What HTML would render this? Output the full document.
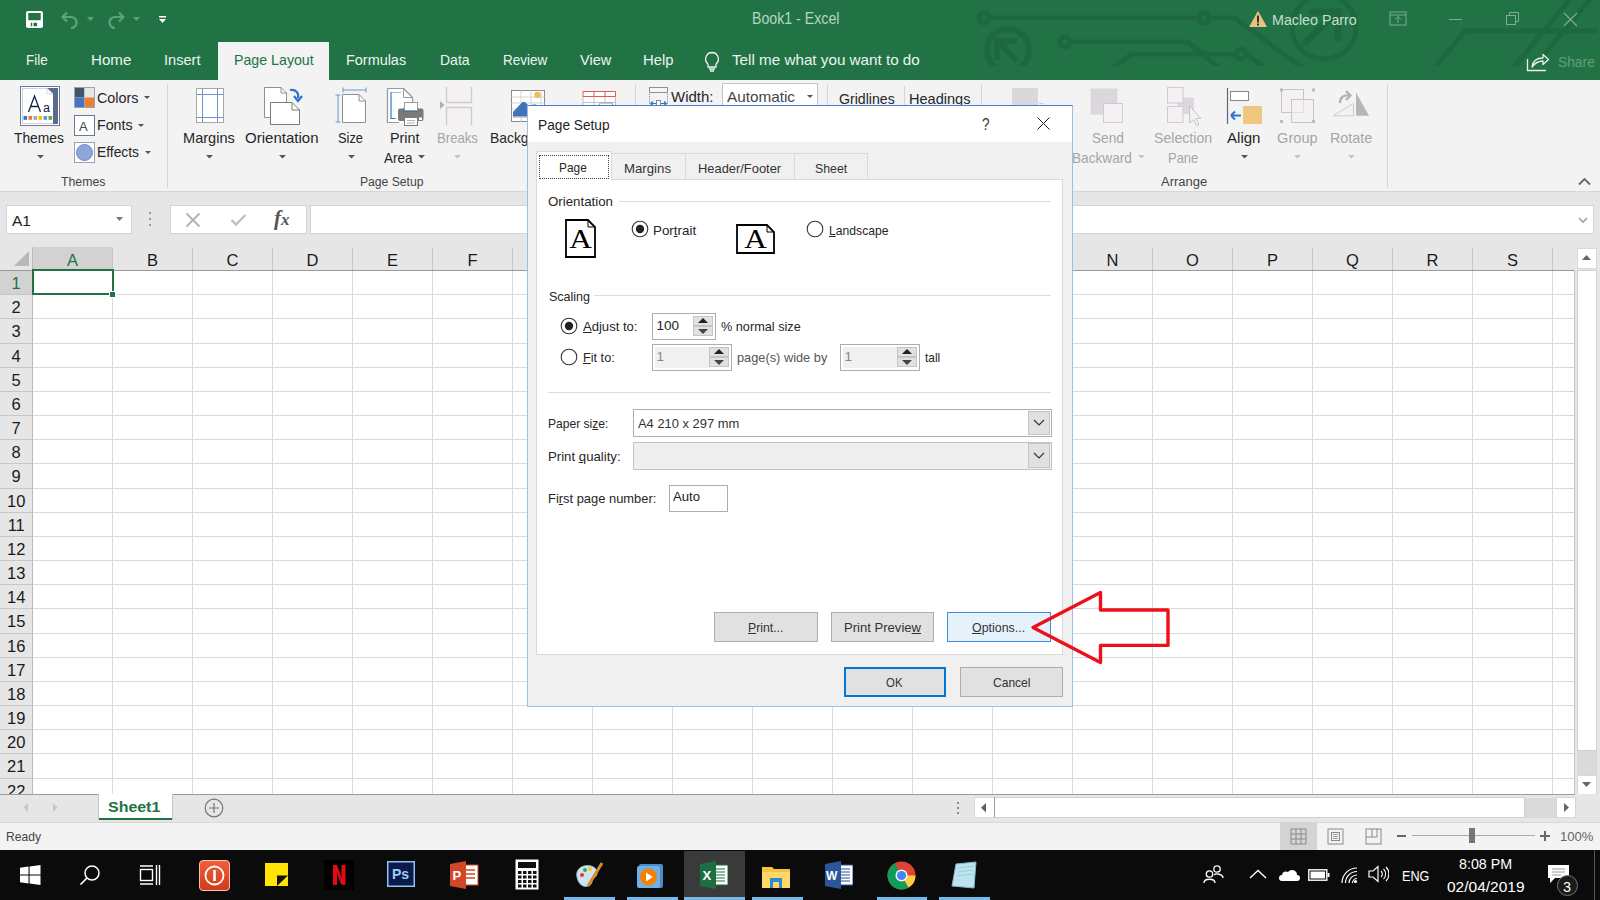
<!DOCTYPE html>
<html><head><meta charset="utf-8">
<style>
*{margin:0;padding:0;box-sizing:border-box}
html,body{width:1600px;height:900px;overflow:hidden;background:#fff;font-family:"Liberation Sans",sans-serif;}
.a{position:absolute}
.t{position:absolute;white-space:nowrap;transform-origin:0 0}
u{text-decoration:underline;text-underline-offset:1px}
</style></head><body>
<div class="a" style="left:0px;top:0px;width:1600px;height:80px;background:#217346"></div>
<svg class="a" style="left:960px;top:0px;" width="640" height="66" viewBox="0 0 640 66"><g stroke="#1e683f" stroke-width="5" fill="none" stroke-linecap="round">
<circle cx="24" cy="18" r="5"/><path d="M29 18H239"/><circle cx="244" cy="18" r="5"/><path d="M249 18H275L345 70"/>
<circle cx="48" cy="50" r="21" stroke-width="6"/><path d="M37 60V41H57M40 44L57 61" stroke-width="6" stroke-linecap="butt"/>
<circle cx="105" cy="42" r="5"/><path d="M110 42H228L262 70"/>
<path d="M150 70L172 54H276"/><circle cx="281" cy="54" r="5"/><path d="M286 54L308 70"/>
<circle cx="364" cy="27" r="32"/><path d="M346 42L374 14" stroke-width="7"/><path d="M352 12H378V38" stroke-width="7"/>
<path d="M473 70L505 31H635"/><path d="M554 67L611 -2"/><path d="M583 56L631 -2"/>
</g></svg>
<div class="t" style="left:751.60px;top:11.37px;font-size:16px;line-height:16px;color:#b7d6c2;transform:scaleX(0.8857);">Book1  -  Excel</div>
<svg class="a" style="left:26px;top:11px;" width="17" height="17" viewBox="0 0 17 17"><rect x="0" y="0" width="17" height="17" rx="2" fill="#fff"/><rect x="2.3" y="2" width="12.4" height="7.2" fill="#217346"/><rect x="4.8" y="11.8" width="1.4" height="3.4" fill="#217346"/><rect x="7.5" y="11.8" width="3.6" height="3.4" fill="#217346"/></svg>
<svg class="a" style="left:61px;top:11px;" width="19" height="18" viewBox="0 0 19 18"><path d="M2 6H10A5.5 5.5 0 0 1 10 17" fill="none" stroke="#5fa27a" stroke-width="2.2"/><path d="M6 1.5L1.5 6L6 10.5" stroke="#5fa27a" stroke-width="2.2" fill="none"/></svg>
<svg class="a" style="left:87px;top:17px;" width="8" height="5" viewBox="0 0 8 5"><path d="M0 0H7L3.5 4Z" fill="#5fa27a"/></svg>
<svg class="a" style="left:106px;top:11px;" width="19" height="18" viewBox="0 0 19 18"><path d="M17 6H9A5.5 5.5 0 0 0 9 17" fill="none" stroke="#5fa27a" stroke-width="2.2"/><path d="M13 1.5L17.5 6L13 10.5" stroke="#5fa27a" stroke-width="2.2" fill="none"/></svg>
<svg class="a" style="left:133px;top:17px;" width="8" height="5" viewBox="0 0 8 5"><path d="M0 0H7L3.5 4Z" fill="#5fa27a"/></svg>
<svg class="a" style="left:158px;top:15px;" width="10" height="10" viewBox="0 0 10 10"><rect x="1" y="1" width="7" height="1.5" fill="#fff"/><path d="M1 4H8L4.5 8Z" fill="#fff"/></svg>
<svg class="a" style="left:1248px;top:10px;" width="20" height="18" viewBox="0 0 20 18"><path d="M10 1L19 17H1Z" fill="#ebc381"/><rect x="9" y="5.5" width="2" height="7" fill="#333"/><rect x="9" y="13.5" width="2" height="2" fill="#333"/></svg>
<div class="t" style="left:1272.00px;top:11.89px;font-size:15.5px;line-height:15.5px;color:#c4dfce;transform:scaleX(0.9199);">Macleo Parro</div>
<svg class="a" style="left:1389px;top:11px;" width="18" height="15" viewBox="0 0 18 15"><rect x="1" y="1" width="16" height="13" fill="none" stroke="#7fae91" stroke-width="1"/><path d="M1 4H17M9 12V6M6 8.5L9 5.5L12 8.5" stroke="#7fae91" fill="none"/></svg>
<div class="a" style="left:1449px;top:19px;width:13px;height:1px;background:#7fae91"></div>
<svg class="a" style="left:1505px;top:11px;" width="15" height="15" viewBox="0 0 15 15"><rect x="1.5" y="4.5" width="9" height="9" fill="none" stroke="#7fae91"/><path d="M4.5 4.5V1.5H13.5V10.5H10.5" fill="none" stroke="#7fae91"/></svg>
<svg class="a" style="left:1563px;top:12px;" width="15" height="15" viewBox="0 0 15 15"><path d="M1 1L14 14M14 1L1 14" stroke="#7fae91" stroke-width="1.1"/></svg>
<div class="a" style="left:218px;top:42px;width:111px;height:38px;background:#f3f3f3"></div>
<div class="t" style="left:26.10px;top:53.34px;font-size:14.5px;line-height:14.5px;color:#eef3ef;transform:scaleX(0.9287);">File</div>
<div class="t" style="left:91.40px;top:53.34px;font-size:14.5px;line-height:14.5px;color:#eef3ef;transform:scaleX(1.0419);">Home</div>
<div class="t" style="left:164.30px;top:53.34px;font-size:14.5px;line-height:14.5px;color:#eef3ef;transform:scaleX(1.0065);">Insert</div>
<div class="t" style="left:346.20px;top:53.34px;font-size:14.5px;line-height:14.5px;color:#eef3ef;transform:scaleX(0.9945);">Formulas</div>
<div class="t" style="left:439.90px;top:53.34px;font-size:14.5px;line-height:14.5px;color:#eef3ef;transform:scaleX(0.9664);">Data</div>
<div class="t" style="left:503.00px;top:53.34px;font-size:14.5px;line-height:14.5px;color:#eef3ef;transform:scaleX(0.9339);">Review</div>
<div class="t" style="left:579.80px;top:53.34px;font-size:14.5px;line-height:14.5px;color:#eef3ef;transform:scaleX(1.0010);">View</div>
<div class="t" style="left:643.40px;top:53.34px;font-size:14.5px;line-height:14.5px;color:#eef3ef;transform:scaleX(1.0227);">Help</div>
<div class="t" style="left:233.70px;top:53.34px;font-size:14.5px;line-height:14.5px;color:#217346;transform:scaleX(0.9788);">Page Layout</div>
<svg class="a" style="left:703px;top:51px;" width="18" height="21" viewBox="0 0 18 21"><path d="M9 1.5A6.5 6.5 0 0 0 5 13V16H13V13A6.5 6.5 0 0 0 9 1.5Z" fill="none" stroke="#f2f2f2" stroke-width="1.3"/><path d="M6 18H12M7 20H11" stroke="#f2f2f2" stroke-width="1.3"/></svg>
<div class="t" style="left:731.70px;top:53.34px;font-size:14.5px;line-height:14.5px;color:#eef3ef;transform:scaleX(1.0496);">Tell me what you want to do</div>
<svg class="a" style="left:1526px;top:50px;" width="24" height="22" viewBox="0 0 24 22"><path d="M1.5 9V20.5H20" fill="none" stroke="#f0f0f0" stroke-width="1.3"/><path d="M6 17C7 10 12 8 17 8V4.5L22.5 9.5L17 14.5V11C12 11 9 13 6 17Z" fill="none" stroke="#f0f0f0" stroke-width="1.3" stroke-linejoin="round"/></svg>
<div class="t" style="left:1557.50px;top:54.39px;font-size:15.5px;line-height:15.5px;color:#629f7c;transform:scaleX(0.8897);">Share</div>
<div class="a" style="left:0px;top:80px;width:1600px;height:112px;background:#f3f3f3"></div>
<div class="a" style="left:0px;top:191px;width:1600px;height:1px;background:#d6d6d6"></div>
<div class="a" style="left:167px;top:84px;width:1px;height:104px;background:#d5d5d5"></div>
<div class="a" style="left:635px;top:84px;width:1px;height:104px;background:#d5d5d5"></div>
<div class="a" style="left:827px;top:84px;width:1px;height:104px;background:#d5d5d5"></div>
<div class="a" style="left:981px;top:84px;width:1px;height:104px;background:#d5d5d5"></div>
<div class="a" style="left:1387px;top:84px;width:1px;height:104px;background:#d5d5d5"></div>
<div class="a" style="left:904px;top:86px;width:1px;height:22px;background:#d5d5d5"></div>
<svg class="a" style="left:20px;top:86px;" width="40" height="40" viewBox="0 0 40 40"><rect x="0.5" y="0.5" width="39" height="39" fill="#fff" stroke="#6b7896"/>
<rect x="2.5" y="2.5" width="35" height="35" fill="#fff" stroke="#cdd4e2"/>
<path d="M27 2H38V38H33V7.5Z" fill="#5b6b88"/><path d="M27 2.5L32.5 8H27Z" fill="#fff" stroke="#b9c2d2" stroke-width="0.6"/>
<path d="M8.5 26L14.5 10L20.5 26M10.7 20.5H18.3" fill="none" stroke="#14204a" stroke-width="1.3"/>
<text x="23" y="26" font-family="Liberation Sans" font-size="12.5" fill="#14204a">a</text>
<rect x="3.5" y="30" width="3.6" height="3.8" fill="#2f74cf"/><rect x="8.5" y="30" width="3.6" height="3.8" fill="#e8782a"/><rect x="13.5" y="30" width="3.6" height="3.8" fill="#a5a5a5"/><rect x="18.5" y="30" width="3.6" height="3.8" fill="#fcb900"/><rect x="23.5" y="30" width="3.6" height="3.8" fill="#4aa3df"/><rect x="28.5" y="30" width="3.6" height="3.8" fill="#66a83c"/></svg>
<div class="t" style="left:14.30px;top:130.64px;font-size:14.5px;line-height:14.5px;color:#262626;transform:scaleX(0.9527);">Themes</div>
<svg class="a" style="left:36.5px;top:155px;" width="7.0" height="4.5" viewBox="0 0 7.0 4.5"><path d="M0 0H7.0L3.5 3.5Z" fill="#555"/></svg>
<svg class="a" style="left:74px;top:87px;" width="21" height="21" viewBox="0 0 21 21"><rect x="0.5" y="0.5" width="20" height="20" fill="#fff" stroke="#9aa2ae"/><rect x="1" y="1" width="9.5" height="9.5" fill="#44546a"/><rect x="10.5" y="1" width="9.5" height="9.5" fill="#e7e6e6"/><rect x="1" y="10.5" width="9.5" height="9.5" fill="#4472c4"/><rect x="10.5" y="10.5" width="9.5" height="9.5" fill="#ed7d31"/></svg>
<div class="t" style="left:97.20px;top:90.94px;font-size:14.5px;line-height:14.5px;color:#262626;transform:scaleX(0.9904);">Colors</div>
<svg class="a" style="left:144px;top:96px;" width="6" height="4" viewBox="0 0 6 4"><path d="M0 0H6L3 3Z" fill="#555"/></svg>
<svg class="a" style="left:74px;top:115px;" width="21" height="21" viewBox="0 0 21 21"><rect x="0.5" y="0.5" width="20" height="20" fill="#fff" stroke="#6a7a96"/><text x="5" y="16" font-family="Liberation Sans" font-size="13" fill="#444">A</text></svg>
<div class="t" style="left:97.40px;top:118.24px;font-size:14.5px;line-height:14.5px;color:#262626;transform:scaleX(0.9817);">Fonts</div>
<svg class="a" style="left:138px;top:124px;" width="6" height="4" viewBox="0 0 6 4"><path d="M0 0H6L3 3Z" fill="#555"/></svg>
<svg class="a" style="left:74px;top:142px;" width="21" height="21" viewBox="0 0 21 21"><rect x="0.5" y="0.5" width="20" height="20" fill="#fff" stroke="#9aa2ae"/><circle cx="10.5" cy="10.5" r="8" fill="#8fa6dc" stroke="#6c8ad0"/></svg>
<div class="t" style="left:97.40px;top:145.14px;font-size:14.5px;line-height:14.5px;color:#262626;transform:scaleX(0.9533);">Effects</div>
<svg class="a" style="left:145px;top:151px;" width="6" height="4" viewBox="0 0 6 4"><path d="M0 0H6L3 3Z" fill="#555"/></svg>
<div class="t" style="left:61.00px;top:176.10px;font-size:12.3px;line-height:12.3px;color:#444;transform:scaleX(1.0015);">Themes</div>
<svg class="a" style="left:195px;top:87px;" width="30" height="37" viewBox="0 0 30 37"><rect x="1.5" y="1.5" width="27" height="34" fill="#fff" stroke="#a8a8a8"/><path d="M1.5 7.5H28.5M1.5 30.5H28.5M7.5 1.5V35.5M22.5 1.5V35.5" stroke="#6e94cf" stroke-width="1"/></svg>
<div class="t" style="left:183.40px;top:130.64px;font-size:14.5px;line-height:14.5px;color:#262626;transform:scaleX(1.0044);">Margins</div>
<svg class="a" style="left:205.5px;top:155px;" width="7.0" height="4.5" viewBox="0 0 7.0 4.5"><path d="M0 0H7.0L3.5 3.5Z" fill="#555"/></svg>
<svg class="a" style="left:263px;top:86px;" width="40" height="40" viewBox="0 0 40 40"><path d="M1.5 1.5H18L23.5 7V31.5H1.5Z" fill="#fff" stroke="#909090"/><path d="M18 1.5V7H23.5" fill="none" stroke="#909090"/>
<path d="M7.5 16.5H29L36.5 24V38.5H7.5Z" fill="#fff" stroke="#7a7a7a"/><path d="M29 16.5V24H36.5" fill="none" stroke="#7a7a7a"/>
<path d="M27 4C33 3 36 7 35 12" fill="none" stroke="#2e75c8" stroke-width="2.2"/><path d="M31 10L35 15L39 10" fill="none" stroke="#2e75c8" stroke-width="2.2"/></svg>
<div class="t" style="left:245.40px;top:130.64px;font-size:14.5px;line-height:14.5px;color:#262626;transform:scaleX(1.0362);">Orientation</div>
<svg class="a" style="left:278.5px;top:155px;" width="7.0" height="4.5" viewBox="0 0 7.0 4.5"><path d="M0 0H7.0L3.5 3.5Z" fill="#555"/></svg>
<svg class="a" style="left:335px;top:87px;" width="34" height="38" viewBox="0 0 34 38"><path d="M7.5 7.5H24L30.5 14V35.5H7.5Z" fill="#fff" stroke="#909090"/><path d="M24 7.5V14H30.5" fill="none" stroke="#909090"/>
<path d="M8 3H31M8 0.5V5.5M31 0.5V5.5" stroke="#6e94cf" stroke-width="1"/><path d="M3 8V35M0.5 8H5.5M0.5 35H5.5" stroke="#6e94cf" stroke-width="1"/></svg>
<div class="t" style="left:338.00px;top:130.64px;font-size:14.5px;line-height:14.5px;color:#262626;transform:scaleX(0.8863);">Size</div>
<svg class="a" style="left:347.5px;top:155px;" width="7.0" height="4.5" viewBox="0 0 7.0 4.5"><path d="M0 0H7.0L3.5 3.5Z" fill="#555"/></svg>
<svg class="a" style="left:385px;top:86px;" width="40" height="41" viewBox="0 0 40 41"><path d="M2.5 2.5H18.5L27.5 11.5V16M2.5 2.5V36.5H14" fill="#fff" stroke="#9a9a9a" stroke-width="1.2"/><path d="M2.5 2.5H18.5L27.5 11.5V36.5H2.5Z" fill="#fff"/><path d="M2.5 2.5H18.5L27.5 11.5V16M2.5 2.5V36.5H14" fill="none" stroke="#9a9a9a" stroke-width="1.2"/><path d="M18.5 2.5V11.5H27.5" fill="none" stroke="#9a9a9a" stroke-width="1"/>
<path d="M16 6.5H6V32.5H10.5" fill="none" stroke="#1f6fc5" stroke-width="1.1"/><path d="M6.5 6.5H16" stroke="#a9c2e0" stroke-width="1.1"/>
<rect x="13" y="22.5" width="25.5" height="12.5" rx="2" fill="#7a7a7a"/><rect x="18" y="22.5" width="15.5" height="3" fill="#1f6fc5"/><rect x="34" y="31.5" width="3" height="2.5" fill="#fff"/>
<rect x="19.5" y="16.5" width="13" height="8" fill="#fff" stroke="#9a9a9a"/>
<rect x="19.5" y="31.5" width="13" height="8" fill="#fff" stroke="#7a7a7a"/><path d="M22 34.5H30M22 37H30" stroke="#aaa" stroke-width="0.9"/></svg>
<div class="t" style="left:389.80px;top:130.64px;font-size:14.5px;line-height:14.5px;color:#262626;transform:scaleX(0.9861);">Print</div>
<div class="t" style="left:383.80px;top:150.64px;font-size:14.5px;line-height:14.5px;color:#262626;transform:scaleX(0.9272);">Area</div>
<svg class="a" style="left:417.5px;top:155px;" width="7.0" height="4.5" viewBox="0 0 7.0 4.5"><path d="M0 0H7.0L3.5 3.5Z" fill="#555"/></svg>
<svg class="a" style="left:438px;top:86px;" width="36" height="40" viewBox="0 0 36 40"><path d="M8.5 1V16.5H33.5V1" fill="#f4f0f4" stroke="#cbcbcb" stroke-width="1.3"/><path d="M8.5 39V21.5H33.5V39" fill="#f4f0f4" stroke="#cbcbcb" stroke-width="1.3"/><path d="M2 15L6.5 19L2 23Z" fill="#b0b0b0"/></svg>
<div class="t" style="left:436.50px;top:130.64px;font-size:14.5px;line-height:14.5px;color:#a6a6a6;transform:scaleX(0.9063);">Breaks</div>
<svg class="a" style="left:453.5px;top:155px;" width="7.0" height="4.5" viewBox="0 0 7.0 4.5"><path d="M0 0H7.0L3.5 3.5Z" fill="#c4c4c4"/></svg>
<svg class="a" style="left:510px;top:89px;" width="40" height="36" viewBox="0 0 40 36"><rect x="1.5" y="1.5" width="33" height="31" fill="#fff" stroke="#8a8a8a"/><path d="M1.5 8H34.5M1.5 14H34.5M1.5 20H34.5M1.5 27H34.5M11 1.5V32.5M21 1.5V32.5M31 1.5V32.5" stroke="#d0d0d0" stroke-width="0.9"/>
<path d="M3 27V23L12.5 13H15L20 18L23 15.5H26L30 20V27Z" fill="#3e75b8"/><rect x="3" y="27" width="30" height="1.5" fill="#aaa"/><circle cx="27.5" cy="6" r="3.3" fill="#eebd62"/></svg>
<div class="t" style="left:489.60px;top:130.64px;font-size:14.5px;line-height:14.5px;color:#262626;transform:scaleX(0.9562);">Background</div>
<svg class="a" style="left:582px;top:90px;" width="36" height="20" viewBox="0 0 36 20"><rect x="1" y="1.5" width="32.5" height="17.5" fill="#fff"/><path d="M1 6.5V19M33.5 6.5V19M1 12.5H33.5M12 6.5V19M23 6.5V19" stroke="#bbb" stroke-width="0.9" fill="none"/><path d="M1 1.5H33.5V6.5H1ZM12 1.5V6.5M23 1.5V6.5" fill="none" stroke="#e05a4e" stroke-width="1"/><rect x="17.5" y="13" width="13" height="7" rx="1" fill="#fff" stroke="#999"/></svg>
<svg class="a" style="left:648px;top:86px;" width="22" height="20" viewBox="0 0 22 20"><rect x="1.5" y="1.5" width="18" height="5" fill="#f6f6f6" stroke="#909090"/><path d="M1.5 8V18M19.5 8V18" stroke="#777" stroke-dasharray="1 1.2"/><path d="M2.5 17.5H18.5M2.5 17.5L5 15.5M2.5 17.5L5 19.5M18.5 17.5L16 15.5M18.5 17.5L16 19.5" stroke="#2e6fb8" stroke-width="1.2" fill="none"/><rect x="8.5" y="14.5" width="4" height="5" fill="#fff" stroke="#888"/></svg>
<div class="t" style="left:671.30px;top:90.24px;font-size:14.5px;line-height:14.5px;color:#262626;transform:scaleX(1.0342);">Width:</div>
<div class="a" style="left:722px;top:83px;width:96px;height:24px;background:#fff;border:1px solid #c6c6c6"></div>
<div class="t" style="left:727.30px;top:90.24px;font-size:14.5px;line-height:14.5px;color:#444;transform:scaleX(1.0547);">Automatic</div>
<svg class="a" style="left:807px;top:95px;" width="6" height="4" viewBox="0 0 6 4"><path d="M0 0H6L3 3Z" fill="#555"/></svg>
<div class="t" style="left:838.80px;top:91.74px;font-size:14.5px;line-height:14.5px;color:#262626;transform:scaleX(0.9735);">Gridlines</div>
<div class="t" style="left:909.00px;top:91.74px;font-size:14.5px;line-height:14.5px;color:#262626;transform:scaleX(1.0038);">Headings</div>
<svg class="a" style="left:1010px;top:87px;" width="38" height="20" viewBox="0 0 38 20"><rect x="2" y="1" width="26" height="19" fill="#dcd7dc"/><path d="M29 16.5H33V20" fill="none" stroke="#d0cbd0"/></svg>
<svg class="a" style="left:1089px;top:87px;" width="36" height="38" viewBox="0 0 36 38"><rect x="1.5" y="1.5" width="27" height="26" fill="#dcd7dc"/><rect x="14.5" y="16.5" width="19" height="19" fill="#f4f0f4" stroke="#d0cbd0"/></svg>
<div class="t" style="left:1091.50px;top:130.64px;font-size:14.5px;line-height:14.5px;color:#a6a6a6;transform:scaleX(0.9390);">Send</div>
<div class="t" style="left:1072.40px;top:150.64px;font-size:14.5px;line-height:14.5px;color:#a6a6a6;transform:scaleX(0.9408);">Backward</div>
<svg class="a" style="left:1137.5px;top:155px;" width="7.0" height="4.5" viewBox="0 0 7.0 4.5"><path d="M0 0H7.0L3.5 3.5Z" fill="#c4c4c4"/></svg>
<svg class="a" style="left:1165px;top:86px;" width="40" height="42" viewBox="0 0 40 42"><rect x="12.5" y="11.5" width="16.5" height="16.5" fill="#dcd7dc"/><rect x="2.5" y="1.5" width="15.5" height="15.5" fill="#f4f0f4" stroke="#cfcbcf"/><rect x="2.5" y="20.5" width="15.5" height="16" fill="#f4f0f4" stroke="#cfcbcf"/><path d="M24.5 20V37L28.5 33.5L31.5 39.5L34 38.5L31 32.5H36Z" fill="#f4f0f4" stroke="#c8c4c8"/></svg>
<div class="t" style="left:1153.70px;top:130.64px;font-size:14.5px;line-height:14.5px;color:#a6a6a6;transform:scaleX(0.9740);">Selection</div>
<div class="t" style="left:1168.00px;top:150.64px;font-size:14.5px;line-height:14.5px;color:#a6a6a6;transform:scaleX(0.8947);">Pane</div>
<div class="t" style="left:1161.20px;top:176.10px;font-size:12.3px;line-height:12.3px;color:#444;transform:scaleX(1.0557);">Arrange</div>
<svg class="a" style="left:1225px;top:87px;" width="40" height="38" viewBox="0 0 40 38"><path d="M2.5 1V37" stroke="#666" stroke-width="1.2"/><rect x="5.5" y="4.5" width="18" height="9" fill="#fff" stroke="#888"/><rect x="18" y="19" width="19" height="18" fill="#f0c77f"/><path d="M6 28.5H16M6 28.5L10 24.5M6 28.5L10 32.5" stroke="#2e75c8" stroke-width="2" fill="none"/></svg>
<div class="t" style="left:1227.00px;top:130.64px;font-size:14.5px;line-height:14.5px;color:#262626;transform:scaleX(1.0389);">Align</div>
<svg class="a" style="left:1240.5px;top:155px;" width="7.0" height="4.5" viewBox="0 0 7.0 4.5"><path d="M0 0H7.0L3.5 3.5Z" fill="#555"/></svg>
<svg class="a" style="left:1278px;top:87px;" width="40" height="38" viewBox="0 0 40 38"><rect x="3.5" y="2.5" width="22" height="23" fill="#f4f0f4" stroke="#c8c4c8"/><rect x="13.5" y="12.5" width="22" height="23" fill="#f4f0f4" fill-opacity="0.6" stroke="#c8c4c8"/><rect x="2" y="1.5" width="3" height="3" fill="#bbb"/><rect x="34" y="1.5" width="3" height="3" fill="#bbb"/><rect x="2" y="33" width="3" height="3" fill="#bbb"/><rect x="34" y="33" width="3" height="3" fill="#bbb"/></svg>
<div class="t" style="left:1276.80px;top:130.64px;font-size:14.5px;line-height:14.5px;color:#a6a6a6;transform:scaleX(1.0099);">Group</div>
<svg class="a" style="left:1293.5px;top:155px;" width="7.0" height="4.5" viewBox="0 0 7.0 4.5"><path d="M0 0H7.0L3.5 3.5Z" fill="#c4c4c4"/></svg>
<svg class="a" style="left:1331px;top:89px;" width="40" height="30" viewBox="0 0 40 30"><path d="M2 26.8L22.5 14.5V26.8Z" fill="#f4f0f4" stroke="#d0ccd0"/><path d="M25 3.5L38 26.8H25Z" fill="#b8b5b8"/><path d="M9 14C9 8 13 6 18 6.5" fill="none" stroke="#b4b0b4" stroke-width="2.4"/><path d="M15 2L19.5 6.5L15 11" fill="none" stroke="#b4b0b4" stroke-width="2.2"/></svg>
<div class="t" style="left:1329.50px;top:130.64px;font-size:14.5px;line-height:14.5px;color:#a6a6a6;transform:scaleX(0.9901);">Rotate</div>
<svg class="a" style="left:1347.5px;top:155px;" width="7.0" height="4.5" viewBox="0 0 7.0 4.5"><path d="M0 0H7.0L3.5 3.5Z" fill="#c4c4c4"/></svg>
<div class="t" style="left:359.50px;top:176.10px;font-size:12.3px;line-height:12.3px;color:#444;transform:scaleX(0.9877);">Page Setup</div>
<svg class="a" style="left:1578px;top:177px;" width="13" height="9" viewBox="0 0 13 9"><path d="M1 7.5L6.5 2L12 7.5" fill="none" stroke="#666" stroke-width="1.9"/></svg>
<div class="a" style="left:0px;top:192px;width:1600px;height:55px;background:#e6e6e6"></div>
<div class="a" style="left:6px;top:205px;width:126px;height:29px;background:#fff;border:1px solid #d4d4d4"></div>
<div class="t" style="left:12.00px;top:212.59px;font-size:15.5px;line-height:15.5px;color:#222;transform:scaleX(1.0021);">A1</div>
<svg class="a" style="left:116px;top:217px;" width="8" height="5" viewBox="0 0 8 5"><path d="M0 0H7L3.5 4Z" fill="#777"/></svg>
<div class="a" style="left:149px;top:212px;width:2px;height:2px;background:#999"></div>
<div class="a" style="left:149px;top:218px;width:2px;height:2px;background:#999"></div>
<div class="a" style="left:149px;top:224px;width:2px;height:2px;background:#999"></div>
<div class="a" style="left:170px;top:205px;width:137px;height:29px;background:#fff;border:1px solid #d4d4d4"></div>
<svg class="a" style="left:185px;top:212px;" width="16" height="16" viewBox="0 0 16 16"><path d="M1.5 1.5L14.5 14.5M14.5 1.5L1.5 14.5" stroke="#b4b4b4" stroke-width="1.9"/></svg>
<svg class="a" style="left:230px;top:212px;" width="17" height="15" viewBox="0 0 17 15"><path d="M1.5 8L6 12.5L15.5 3" fill="none" stroke="#c0c0c0" stroke-width="2.4"/></svg>
<div class="t" style="left:274px;top:206px;font-family:'Liberation Serif',serif;font-style:italic;font-weight:bold;font-size:21px;line-height:24px;color:#555">f<span style="font-size:17px">x</span></div>
<div class="a" style="left:310px;top:205px;width:1284px;height:29px;background:#fff;border:1px solid #d4d4d4"></div>
<svg class="a" style="left:1578px;top:217px;" width="10" height="7" viewBox="0 0 10 7"><path d="M1 1L5 5L9 1" fill="none" stroke="#a0a0a0" stroke-width="1.6"/></svg>
<div class="a" style="left:0px;top:247px;width:1575px;height:548px;background:#fff"></div>
<div class="a" style="left:0px;top:247px;width:1575px;height:23px;background:#e6e6e6"></div>
<div class="a" style="left:32px;top:247px;width:81px;height:23px;background:#d2d2d2"></div>
<div class="a" style="left:0px;top:270px;width:1575px;height:1px;background:#9b9b9b"></div>
<svg class="a" style="left:13px;top:250px;" width="17" height="17" viewBox="0 0 17 17"><path d="M16 1V16H1Z" fill="#b8b8b8"/></svg>
<div class="a" style="left:0px;top:271px;width:32px;height:524px;background:#e6e6e6"></div>
<div class="a" style="left:32px;top:247px;width:1px;height:548px;background:#bababa"></div>
<div class="a" style="left:0px;top:271px;width:32px;height:23px;background:#d2d2d2"></div>
<div class="a" style="left:33px;top:294px;width:1542px;height:1px;background:#dadada"></div>
<div class="a" style="left:0px;top:294px;width:32px;height:1px;background:#c6c6c6"></div>
<div class="a" style="left:33px;top:318px;width:1542px;height:1px;background:#dadada"></div>
<div class="a" style="left:0px;top:318px;width:32px;height:1px;background:#c6c6c6"></div>
<div class="a" style="left:33px;top:343px;width:1542px;height:1px;background:#dadada"></div>
<div class="a" style="left:0px;top:343px;width:32px;height:1px;background:#c6c6c6"></div>
<div class="a" style="left:33px;top:367px;width:1542px;height:1px;background:#dadada"></div>
<div class="a" style="left:0px;top:367px;width:32px;height:1px;background:#c6c6c6"></div>
<div class="a" style="left:33px;top:391px;width:1542px;height:1px;background:#dadada"></div>
<div class="a" style="left:0px;top:391px;width:32px;height:1px;background:#c6c6c6"></div>
<div class="a" style="left:33px;top:415px;width:1542px;height:1px;background:#dadada"></div>
<div class="a" style="left:0px;top:415px;width:32px;height:1px;background:#c6c6c6"></div>
<div class="a" style="left:33px;top:439px;width:1542px;height:1px;background:#dadada"></div>
<div class="a" style="left:0px;top:439px;width:32px;height:1px;background:#c6c6c6"></div>
<div class="a" style="left:33px;top:463px;width:1542px;height:1px;background:#dadada"></div>
<div class="a" style="left:0px;top:463px;width:32px;height:1px;background:#c6c6c6"></div>
<div class="a" style="left:33px;top:488px;width:1542px;height:1px;background:#dadada"></div>
<div class="a" style="left:0px;top:488px;width:32px;height:1px;background:#c6c6c6"></div>
<div class="a" style="left:33px;top:512px;width:1542px;height:1px;background:#dadada"></div>
<div class="a" style="left:0px;top:512px;width:32px;height:1px;background:#c6c6c6"></div>
<div class="a" style="left:33px;top:536px;width:1542px;height:1px;background:#dadada"></div>
<div class="a" style="left:0px;top:536px;width:32px;height:1px;background:#c6c6c6"></div>
<div class="a" style="left:33px;top:560px;width:1542px;height:1px;background:#dadada"></div>
<div class="a" style="left:0px;top:560px;width:32px;height:1px;background:#c6c6c6"></div>
<div class="a" style="left:33px;top:584px;width:1542px;height:1px;background:#dadada"></div>
<div class="a" style="left:0px;top:584px;width:32px;height:1px;background:#c6c6c6"></div>
<div class="a" style="left:33px;top:608px;width:1542px;height:1px;background:#dadada"></div>
<div class="a" style="left:0px;top:608px;width:32px;height:1px;background:#c6c6c6"></div>
<div class="a" style="left:33px;top:633px;width:1542px;height:1px;background:#dadada"></div>
<div class="a" style="left:0px;top:633px;width:32px;height:1px;background:#c6c6c6"></div>
<div class="a" style="left:33px;top:657px;width:1542px;height:1px;background:#dadada"></div>
<div class="a" style="left:0px;top:657px;width:32px;height:1px;background:#c6c6c6"></div>
<div class="a" style="left:33px;top:681px;width:1542px;height:1px;background:#dadada"></div>
<div class="a" style="left:0px;top:681px;width:32px;height:1px;background:#c6c6c6"></div>
<div class="a" style="left:33px;top:705px;width:1542px;height:1px;background:#dadada"></div>
<div class="a" style="left:0px;top:705px;width:32px;height:1px;background:#c6c6c6"></div>
<div class="a" style="left:33px;top:729px;width:1542px;height:1px;background:#dadada"></div>
<div class="a" style="left:0px;top:729px;width:32px;height:1px;background:#c6c6c6"></div>
<div class="a" style="left:33px;top:753px;width:1542px;height:1px;background:#dadada"></div>
<div class="a" style="left:0px;top:753px;width:32px;height:1px;background:#c6c6c6"></div>
<div class="a" style="left:33px;top:778px;width:1542px;height:1px;background:#dadada"></div>
<div class="a" style="left:0px;top:778px;width:32px;height:1px;background:#c6c6c6"></div>
<div class="a" style="left:112px;top:271px;width:1px;height:524px;background:#dadada"></div>
<div class="a" style="left:112px;top:248px;width:1px;height:22px;background:#c6c6c6"></div>
<div class="a" style="left:192px;top:271px;width:1px;height:524px;background:#dadada"></div>
<div class="a" style="left:192px;top:248px;width:1px;height:22px;background:#c6c6c6"></div>
<div class="a" style="left:272px;top:271px;width:1px;height:524px;background:#dadada"></div>
<div class="a" style="left:272px;top:248px;width:1px;height:22px;background:#c6c6c6"></div>
<div class="a" style="left:352px;top:271px;width:1px;height:524px;background:#dadada"></div>
<div class="a" style="left:352px;top:248px;width:1px;height:22px;background:#c6c6c6"></div>
<div class="a" style="left:432px;top:271px;width:1px;height:524px;background:#dadada"></div>
<div class="a" style="left:432px;top:248px;width:1px;height:22px;background:#c6c6c6"></div>
<div class="a" style="left:512px;top:271px;width:1px;height:524px;background:#dadada"></div>
<div class="a" style="left:512px;top:248px;width:1px;height:22px;background:#c6c6c6"></div>
<div class="a" style="left:592px;top:271px;width:1px;height:524px;background:#dadada"></div>
<div class="a" style="left:592px;top:248px;width:1px;height:22px;background:#c6c6c6"></div>
<div class="a" style="left:672px;top:271px;width:1px;height:524px;background:#dadada"></div>
<div class="a" style="left:672px;top:248px;width:1px;height:22px;background:#c6c6c6"></div>
<div class="a" style="left:752px;top:271px;width:1px;height:524px;background:#dadada"></div>
<div class="a" style="left:752px;top:248px;width:1px;height:22px;background:#c6c6c6"></div>
<div class="a" style="left:832px;top:271px;width:1px;height:524px;background:#dadada"></div>
<div class="a" style="left:832px;top:248px;width:1px;height:22px;background:#c6c6c6"></div>
<div class="a" style="left:912px;top:271px;width:1px;height:524px;background:#dadada"></div>
<div class="a" style="left:912px;top:248px;width:1px;height:22px;background:#c6c6c6"></div>
<div class="a" style="left:992px;top:271px;width:1px;height:524px;background:#dadada"></div>
<div class="a" style="left:992px;top:248px;width:1px;height:22px;background:#c6c6c6"></div>
<div class="a" style="left:1072px;top:271px;width:1px;height:524px;background:#dadada"></div>
<div class="a" style="left:1072px;top:248px;width:1px;height:22px;background:#c6c6c6"></div>
<div class="a" style="left:1152px;top:271px;width:1px;height:524px;background:#dadada"></div>
<div class="a" style="left:1152px;top:248px;width:1px;height:22px;background:#c6c6c6"></div>
<div class="a" style="left:1232px;top:271px;width:1px;height:524px;background:#dadada"></div>
<div class="a" style="left:1232px;top:248px;width:1px;height:22px;background:#c6c6c6"></div>
<div class="a" style="left:1312px;top:271px;width:1px;height:524px;background:#dadada"></div>
<div class="a" style="left:1312px;top:248px;width:1px;height:22px;background:#c6c6c6"></div>
<div class="a" style="left:1392px;top:271px;width:1px;height:524px;background:#dadada"></div>
<div class="a" style="left:1392px;top:248px;width:1px;height:22px;background:#c6c6c6"></div>
<div class="a" style="left:1472px;top:271px;width:1px;height:524px;background:#dadada"></div>
<div class="a" style="left:1472px;top:248px;width:1px;height:22px;background:#c6c6c6"></div>
<div class="a" style="left:1552px;top:271px;width:1px;height:524px;background:#dadada"></div>
<div class="a" style="left:1552px;top:248px;width:1px;height:22px;background:#c6c6c6"></div>
<div class="a" style="left:1574px;top:270px;width:1px;height:525px;background:#c6c6c6"></div>
<div class="t" style="left:67.00px;top:251.85px;font-size:16.5px;line-height:16.5px;color:#217346;">A</div>
<div class="t" style="left:147.00px;top:251.85px;font-size:16.5px;line-height:16.5px;color:#1a1a1a;">B</div>
<div class="t" style="left:226.54px;top:251.85px;font-size:16.5px;line-height:16.5px;color:#1a1a1a;">C</div>
<div class="t" style="left:306.54px;top:251.85px;font-size:16.5px;line-height:16.5px;color:#1a1a1a;">D</div>
<div class="t" style="left:387.00px;top:251.85px;font-size:16.5px;line-height:16.5px;color:#1a1a1a;">E</div>
<div class="t" style="left:467.46px;top:251.85px;font-size:16.5px;line-height:16.5px;color:#1a1a1a;">F</div>
<div class="t" style="left:546.08px;top:251.85px;font-size:16.5px;line-height:16.5px;color:#1a1a1a;">G</div>
<div class="t" style="left:626.54px;top:251.85px;font-size:16.5px;line-height:16.5px;color:#1a1a1a;">H</div>
<div class="t" style="left:710.21px;top:251.85px;font-size:16.5px;line-height:16.5px;color:#1a1a1a;">I</div>
<div class="t" style="left:788.38px;top:251.85px;font-size:16.5px;line-height:16.5px;color:#1a1a1a;">J</div>
<div class="t" style="left:867.00px;top:251.85px;font-size:16.5px;line-height:16.5px;color:#1a1a1a;">K</div>
<div class="t" style="left:947.91px;top:251.85px;font-size:16.5px;line-height:16.5px;color:#1a1a1a;">L</div>
<div class="t" style="left:1025.63px;top:251.85px;font-size:16.5px;line-height:16.5px;color:#1a1a1a;">M</div>
<div class="t" style="left:1106.54px;top:251.85px;font-size:16.5px;line-height:16.5px;color:#1a1a1a;">N</div>
<div class="t" style="left:1186.08px;top:251.85px;font-size:16.5px;line-height:16.5px;color:#1a1a1a;">O</div>
<div class="t" style="left:1267.00px;top:251.85px;font-size:16.5px;line-height:16.5px;color:#1a1a1a;">P</div>
<div class="t" style="left:1346.08px;top:251.85px;font-size:16.5px;line-height:16.5px;color:#1a1a1a;">Q</div>
<div class="t" style="left:1426.54px;top:251.85px;font-size:16.5px;line-height:16.5px;color:#1a1a1a;">R</div>
<div class="t" style="left:1507.00px;top:251.85px;font-size:16.5px;line-height:16.5px;color:#1a1a1a;">S</div>
<div class="t" style="left:11.61px;top:274.55px;font-size:16.5px;line-height:16.5px;color:#217346;">1</div>
<div class="t" style="left:11.61px;top:298.55px;font-size:16.5px;line-height:16.5px;color:#1a1a1a;">2</div>
<div class="t" style="left:11.61px;top:323.05px;font-size:16.5px;line-height:16.5px;color:#1a1a1a;">3</div>
<div class="t" style="left:11.61px;top:347.55px;font-size:16.5px;line-height:16.5px;color:#1a1a1a;">4</div>
<div class="t" style="left:11.61px;top:371.55px;font-size:16.5px;line-height:16.5px;color:#1a1a1a;">5</div>
<div class="t" style="left:11.61px;top:395.55px;font-size:16.5px;line-height:16.5px;color:#1a1a1a;">6</div>
<div class="t" style="left:11.61px;top:419.55px;font-size:16.5px;line-height:16.5px;color:#1a1a1a;">7</div>
<div class="t" style="left:11.61px;top:443.55px;font-size:16.5px;line-height:16.5px;color:#1a1a1a;">8</div>
<div class="t" style="left:11.61px;top:468.05px;font-size:16.5px;line-height:16.5px;color:#1a1a1a;">9</div>
<div class="t" style="left:7.02px;top:492.55px;font-size:16.5px;line-height:16.5px;color:#1a1a1a;">10</div>
<div class="t" style="left:7.64px;top:516.55px;font-size:16.5px;line-height:16.5px;color:#1a1a1a;">11</div>
<div class="t" style="left:7.02px;top:540.55px;font-size:16.5px;line-height:16.5px;color:#1a1a1a;">12</div>
<div class="t" style="left:7.02px;top:564.55px;font-size:16.5px;line-height:16.5px;color:#1a1a1a;">13</div>
<div class="t" style="left:7.02px;top:588.55px;font-size:16.5px;line-height:16.5px;color:#1a1a1a;">14</div>
<div class="t" style="left:7.02px;top:613.05px;font-size:16.5px;line-height:16.5px;color:#1a1a1a;">15</div>
<div class="t" style="left:7.02px;top:637.55px;font-size:16.5px;line-height:16.5px;color:#1a1a1a;">16</div>
<div class="t" style="left:7.02px;top:661.55px;font-size:16.5px;line-height:16.5px;color:#1a1a1a;">17</div>
<div class="t" style="left:7.02px;top:685.55px;font-size:16.5px;line-height:16.5px;color:#1a1a1a;">18</div>
<div class="t" style="left:7.02px;top:709.55px;font-size:16.5px;line-height:16.5px;color:#1a1a1a;">19</div>
<div class="t" style="left:7.02px;top:733.55px;font-size:16.5px;line-height:16.5px;color:#1a1a1a;">20</div>
<div class="t" style="left:7.02px;top:758.05px;font-size:16.5px;line-height:16.5px;color:#1a1a1a;">21</div>
<div class="t" style="left:7.02px;top:782.55px;font-size:16.5px;line-height:16.5px;color:#1a1a1a;">22</div>
<div class="a" style="left:32px;top:269px;width:82px;height:2px;background:#217346"></div>
<div class="a" style="left:32px;top:269px;width:2px;height:26px;background:#217346"></div>
<div class="a" style="left:112px;top:269px;width:2px;height:24px;background:#217346"></div>
<div class="a" style="left:32px;top:293px;width:78px;height:2px;background:#217346"></div>
<div class="a" style="left:110px;top:292px;width:5px;height:5px;background:#217346;outline:1px solid #fff"></div>
<div class="a" style="left:1575px;top:247px;width:25px;height:548px;background:#e6e6e6"></div>
<div class="a" style="left:1577px;top:248px;width:20px;height:21px;background:#fff;border:1px solid #dadada"></div>
<svg class="a" style="left:1582px;top:255px;" width="10" height="6" viewBox="0 0 10 6"><path d="M0 5H9L4.5 0Z" fill="#666"/></svg>
<div class="a" style="left:1577px;top:270px;width:20px;height:481px;background:#fff;border:1px solid #d0d0d0"></div>
<div class="a" style="left:1577px;top:751px;width:20px;height:24px;background:#dadada"></div>
<div class="a" style="left:1577px;top:775px;width:20px;height:20px;background:#fff;border:1px solid #d6d6d6"></div>
<svg class="a" style="left:1582px;top:782px;" width="10" height="6" viewBox="0 0 10 6"><path d="M0 0H9L4.5 5Z" fill="#666"/></svg>
<div class="a" style="left:0px;top:794px;width:1600px;height:28px;background:#e6e6e6"></div>
<div class="a" style="left:0px;top:794px;width:1575px;height:1px;background:#9b9b9b"></div>
<svg class="a" style="left:22px;top:802px;" width="8" height="11" viewBox="0 0 8 11"><path d="M6 1L1.5 5.5L6 10" fill="#c6c6c6"/></svg>
<svg class="a" style="left:51px;top:802px;" width="8" height="11" viewBox="0 0 8 11"><path d="M2 1L6.5 5.5L2 10" fill="#c6c6c6"/></svg>
<div class="a" style="left:98px;top:794px;width:75px;height:26px;background:#fff;border-left:1px solid #c6c6c6;border-right:1px solid #c6c6c6"></div>
<div class="a" style="left:99px;top:818px;width:73px;height:2px;background:#217346"></div>
<div class="t" style="left:108.00px;top:799.39px;font-size:15.5px;line-height:15.5px;color:#217346;font-weight:bold;transform:scaleX(1.0289);">Sheet1</div>
<svg class="a" style="left:204px;top:798px;" width="20" height="20" viewBox="0 0 20 20"><circle cx="10" cy="10" r="8.8" fill="none" stroke="#777" stroke-width="1.2"/><path d="M10 5V15M5 10H15" stroke="#777" stroke-width="1.2"/></svg>
<div class="a" style="left:957px;top:802px;width:2px;height:2px;background:#8a8a8a"></div>
<div class="a" style="left:957px;top:807px;width:2px;height:2px;background:#8a8a8a"></div>
<div class="a" style="left:957px;top:812px;width:2px;height:2px;background:#8a8a8a"></div>
<div class="a" style="left:974px;top:797px;width:21px;height:21px;background:#fff;border:1px solid #dadada"></div>
<svg class="a" style="left:980px;top:803px;" width="8" height="10" viewBox="0 0 8 10"><path d="M6 0V9.5L1 4.75Z" fill="#606060"/></svg>
<div class="a" style="left:994px;top:797px;width:531px;height:21px;background:#fff;border:1px solid #d0d0d0;border-left:1px solid #a0a0a0"></div>
<div class="a" style="left:1525px;top:798px;width:31px;height:20px;background:#dadada"></div>
<div class="a" style="left:1556px;top:797px;width:20px;height:21px;background:#fff;border:1px solid #d6d6d6"></div>
<svg class="a" style="left:1563px;top:803px;" width="8" height="10" viewBox="0 0 8 10"><path d="M1 0V9L6 4.5Z" fill="#666"/></svg>
<div class="a" style="left:0px;top:822px;width:1600px;height:28px;background:#f3f3f3"></div>
<div class="a" style="left:0px;top:822px;width:1600px;height:1px;background:#d8d8d8"></div>
<div class="t" style="left:6.00px;top:829.59px;font-size:13.5px;line-height:13.5px;color:#444;transform:scaleX(0.8969);">Ready</div>
<div class="a" style="left:1280px;top:823px;width:37px;height:27px;background:#d4d4d4"></div>
<svg class="a" style="left:1290px;top:828px;" width="17" height="17" viewBox="0 0 17 17"><path d="M1 1H16V16H1ZM1 6H16M1 11H16M6 1V16M11 1V16" fill="none" stroke="#8a8a8a" stroke-width="1"/></svg>
<svg class="a" style="left:1327px;top:828px;" width="17" height="17" viewBox="0 0 17 17"><rect x="1" y="1" width="15" height="15" fill="none" stroke="#8a8a8a" stroke-width="1"/><rect x="4.5" y="4.5" width="8" height="8" fill="none" stroke="#8a8a8a"/><path d="M6 6.5H11M6 8.5H11M6 10.5H11" stroke="#8a8a8a" stroke-width="0.8"/></svg>
<svg class="a" style="left:1365px;top:828px;" width="17" height="17" viewBox="0 0 17 17"><rect x="1" y="1" width="15" height="15" fill="none" stroke="#8a8a8a" stroke-width="1"/><path d="M7 1V9H12V1M1 9H7" fill="none" stroke="#8a8a8a" stroke-width="1"/></svg>
<div class="a" style="left:1397px;top:835px;width:9px;height:2px;background:#666"></div>
<div class="a" style="left:1412px;top:835px;width:123px;height:1px;background:#aaa"></div>
<div class="a" style="left:1469px;top:828px;width:6px;height:15px;background:#777"></div>
<div class="a" style="left:1540px;top:835px;width:10px;height:2px;background:#666"></div>
<div class="a" style="left:1544px;top:831px;width:2px;height:10px;background:#666"></div>
<div class="t" style="left:1560.00px;top:829.59px;font-size:13.5px;line-height:13.5px;color:#666;transform:scaleX(0.9702);">100%</div>
<div class="a" style="left:0px;top:850px;width:1600px;height:50px;background:#0b0b0b"></div>
<svg class="a" style="left:20px;top:865px;" width="21" height="20" viewBox="0 0 21 20"><path d="M0 2.8L8.5 1.6V9.4H0ZM9.6 1.4L20.5 0V9.4H9.6ZM0 10.6H8.5V18.4L0 17.2ZM9.6 10.6H20.5V20L9.6 18.6Z" fill="#fff"/></svg>
<svg class="a" style="left:79px;top:864px;" width="22" height="22" viewBox="0 0 22 22"><circle cx="13" cy="9" r="7" fill="none" stroke="#fff" stroke-width="1.5"/><path d="M8 14L1.5 20.5" stroke="#fff" stroke-width="1.7"/></svg>
<svg class="a" style="left:139px;top:864px;" width="22" height="22" viewBox="0 0 22 22"><rect x="1.5" y="5.5" width="12" height="11" fill="none" stroke="#fff" stroke-width="1.4"/><path d="M1 2H14M1 20H14M17.5 1V21M20.5 1V21" stroke="#fff" stroke-width="1.4"/></svg>
<svg class="a" style="left:199px;top:860px;" width="31" height="31" viewBox="0 0 31 31"><defs><linearGradient id="rg" x1="0" y1="0" x2="0" y2="1"><stop offset="0" stop-color="#f0603a"/><stop offset="1" stop-color="#cf3a1a"/></linearGradient></defs><rect x="0.5" y="0.5" width="30" height="30" rx="3.5" fill="url(#rg)" stroke="#f3c2b4"/><circle cx="15.5" cy="15.5" r="9" fill="none" stroke="#fff" stroke-width="1.8"/><path d="M15.5 10V21" stroke="#fff" stroke-width="2.6"/></svg>
<svg class="a" style="left:265px;top:863px;" width="23" height="23" viewBox="0 0 23 23"><rect x="0" y="0" width="23" height="23" fill="#ffe500"/><path d="M12 12.5H23L12 23Z" fill="#111"/></svg>
<svg class="a" style="left:324px;top:860px;" width="30" height="30" viewBox="0 0 30 30"><rect width="30" height="30" fill="#000"/><path d="M9 5H13L17.5 18V5H21.5V25L17 24.5L13 12.5V24.8L9 25.2Z" fill="#e50914"/></svg>
<svg class="a" style="left:387px;top:861px;" width="28" height="26" viewBox="0 0 28 26"><rect x="0.75" y="0.75" width="26.5" height="24.5" fill="#0b1a4a" stroke="#8cc4f4" stroke-width="1.5"/><text x="5" y="18" font-family="Liberation Sans" font-weight="bold" font-size="14" fill="#9acdf8">Ps</text></svg>
<svg class="a" style="left:450px;top:861px;" width="29" height="28" viewBox="0 0 29 28"><rect x="12" y="4" width="16" height="20" fill="#fff" stroke="#d24726"/><path d="M16 9H25M16 13H25M16 17H25" stroke="#d24726" stroke-width="1.4"/><path d="M0 3L16 0V28L0 25Z" fill="#d24726"/><text x="2.5" y="19" font-family="Liberation Sans" font-weight="bold" font-size="13" fill="#fff">P</text></svg>
<svg class="a" style="left:515px;top:859px;" width="24" height="31" viewBox="0 0 24 31"><rect x="0.5" y="0.5" width="23" height="30" fill="#fff"/><rect x="3" y="3" width="18" height="6" fill="#111"/><rect x="3" y="12.0" width="3.5" height="3" fill="#111"/><rect x="3" y="16.5" width="3.5" height="3" fill="#111"/><rect x="3" y="21.0" width="3.5" height="3" fill="#111"/><rect x="3" y="25.5" width="3.5" height="3" fill="#111"/><rect x="8" y="12.0" width="3.5" height="3" fill="#111"/><rect x="8" y="16.5" width="3.5" height="3" fill="#111"/><rect x="8" y="21.0" width="3.5" height="3" fill="#111"/><rect x="8" y="25.5" width="3.5" height="3" fill="#111"/><rect x="13" y="12.0" width="3.5" height="3" fill="#111"/><rect x="13" y="16.5" width="3.5" height="3" fill="#111"/><rect x="13" y="21.0" width="3.5" height="3" fill="#111"/><rect x="13" y="25.5" width="3.5" height="3" fill="#111"/><rect x="18" y="12.0" width="3.5" height="3" fill="#111"/><rect x="18" y="16.5" width="3.5" height="3" fill="#111"/><rect x="18" y="21.0" width="3.5" height="3" fill="#111"/><rect x="18" y="25.5" width="3.5" height="3" fill="#111"/></svg>
<svg class="a" style="left:574px;top:861px;" width="31" height="30" viewBox="0 0 31 30"><path d="M3 16C1 8 9 3 17 5C24 7 25 14 20 17C17 19 19 22 16 24C10 28 4 23 3 16Z" fill="#cfe3f2" stroke="#8fb8d8"/><circle cx="8" cy="14" r="2" fill="#e33"/><circle cx="11" cy="9" r="2" fill="#3a3"/><circle cx="16" cy="8" r="2" fill="#fc0"/><path d="M28 2L14 25" stroke="#d98a2b" stroke-width="3"/></svg>
<svg class="a" style="left:637px;top:864px;" width="26" height="25" viewBox="0 0 26 25"><rect x="2" y="0" width="24" height="24" rx="2" fill="#4a8cc8"/><rect x="0" y="2" width="23" height="22" rx="2" fill="#6fb0e6"/><circle cx="11.5" cy="13" r="8.5" fill="#f77f00"/><path d="M9 8.5V17.5L16 13Z" fill="#fff"/></svg>
<div class="a" style="left:684px;top:851px;width:61px;height:46px;background:#3a3a3a"></div>
<svg class="a" style="left:700px;top:861px;" width="28" height="28" viewBox="0 0 28 28"><rect x="12" y="4" width="16" height="20" fill="#fff" stroke="#1d6f42"/><path d="M16 8H25M16 11H25M16 14H25M16 17H25M16 20H25" stroke="#1d6f42" stroke-width="1.2"/><path d="M0 3L16 0V28L0 25Z" fill="#1d6f42"/><text x="2.5" y="19" font-family="Liberation Sans" font-weight="bold" font-size="13" fill="#fff">X</text></svg>
<svg class="a" style="left:762px;top:864px;" width="28" height="25" viewBox="0 0 28 25"><path d="M0 3H10L12 5H28V24H0Z" fill="#f5c342"/><rect x="0" y="8" width="28" height="16" fill="#ffd766"/><rect x="8" y="14" width="12" height="10" fill="#2a8ad4"/><rect x="11" y="18" width="6" height="6" fill="#ffd766"/></svg>
<svg class="a" style="left:825px;top:861px;" width="28" height="28" viewBox="0 0 28 28"><rect x="12" y="4" width="16" height="20" fill="#fff" stroke="#2b579a"/><path d="M16 8H25M16 11H25M16 14H25M16 17H25M16 20H25" stroke="#2b579a" stroke-width="1.2"/><path d="M0 3L16 0V28L0 25Z" fill="#2b579a"/><text x="1" y="19" font-family="Liberation Sans" font-weight="bold" font-size="12" fill="#fff">W</text></svg>
<svg class="a" style="left:887px;top:861px;" width="29" height="29" viewBox="0 0 29 29"><circle cx="14.5" cy="14.5" r="14" fill="#db4437"/><path d="M14.5 14.5L2.4 21.5A14 14 0 0 0 21.5 26.6Z" fill="#0f9d58"/><path d="M14.5 14.5L21.5 26.6A14 14 0 0 0 28.5 14.5H14.5Z" fill="#ffcd40"/><path d="M14.5 14.5L2.4 21.5A14 14 0 0 1 7.5 2.4Z" fill="#0f9d58"/><circle cx="14.5" cy="14.5" r="6" fill="#fff"/><circle cx="14.5" cy="14.5" r="4.6" fill="#4285f4"/></svg>
<svg class="a" style="left:950px;top:860px;" width="28" height="30" viewBox="0 0 28 30"><path d="M6 4L26 2L24 28L2 26Z" fill="#bfe3ef" stroke="#7fb7cf"/><path d="M8 8L24 6M8 12L23 10M7 16L23 14" stroke="#8cc" stroke-width="0.8"/></svg>
<div class="a" style="left:564px;top:897px;width:51px;height:3px;background:#76b9ed"></div>
<div class="a" style="left:627px;top:897px;width:51px;height:3px;background:#76b9ed"></div>
<div class="a" style="left:684px;top:897px;width:61px;height:3px;background:#76b9ed"></div>
<div class="a" style="left:752px;top:897px;width:51px;height:3px;background:#76b9ed"></div>
<div class="a" style="left:877px;top:897px;width:50px;height:3px;background:#76b9ed"></div>
<div class="a" style="left:939px;top:897px;width:51px;height:3px;background:#76b9ed"></div>
<svg class="a" style="left:1203px;top:864px;" width="21" height="20" viewBox="0 0 21 20"><circle cx="6.5" cy="10" r="3.2" fill="none" stroke="#fff" stroke-width="1.3"/><path d="M1 19C1 14 12 14 12 19" fill="none" stroke="#fff" stroke-width="1.3"/><circle cx="14" cy="5" r="3.2" fill="none" stroke="#fff" stroke-width="1.3"/><path d="M11 11C13 9 20 10 20 14" fill="none" stroke="#fff" stroke-width="1.3"/></svg>
<svg class="a" style="left:1249px;top:869px;" width="18" height="10" viewBox="0 0 18 10"><path d="M1 9L9 1.5L17 9" fill="none" stroke="#fff" stroke-width="1.4"/></svg>
<svg class="a" style="left:1277px;top:867px;" width="23" height="15" viewBox="0 0 23 15"><path d="M5 14H20A3 3 0 0 0 20 8A5 5 0 0 0 11 5A4 4 0 0 0 5 8A3 3 0 0 0 5 14Z" fill="#fff"/></svg>
<svg class="a" style="left:1308px;top:869px;" width="22" height="13" viewBox="0 0 22 13"><rect x="0.8" y="0.8" width="18" height="10.4" fill="none" stroke="#fff" stroke-width="1.4"/><rect x="2.5" y="2.5" width="14.6" height="7" fill="#fff"/><rect x="19.5" y="4" width="2" height="4" fill="#fff"/></svg>
<svg class="a" style="left:1340px;top:866px;" width="19" height="18" viewBox="0 0 19 18"><path d="M2 17A15 15 0 0 1 17 2M5.5 17A11.5 11.5 0 0 1 17 5.5M9 17A8 8 0 0 1 17 9M12.5 17A4.5 4.5 0 0 1 17 12.5" fill="none" stroke="#fff" stroke-width="1.2"/><circle cx="15.5" cy="15.5" r="1.6" fill="#fff"/></svg>
<svg class="a" style="left:1368px;top:865px;" width="21" height="18" viewBox="0 0 21 18"><path d="M1 6H5L10 1.5V16.5L5 12H1Z" fill="none" stroke="#fff" stroke-width="1.2"/><path d="M13 6A4 4 0 0 1 13 12M15.5 4A7 7 0 0 1 15.5 14M18 2A10 10 0 0 1 18 16" fill="none" stroke="#fff" stroke-width="1.1"/></svg>
<div class="t" style="left:1402.30px;top:868.12px;font-size:15px;line-height:15px;color:#fff;transform:scaleX(0.8429);">ENG</div>
<div class="t" style="left:1458.70px;top:857.44px;font-size:14.5px;line-height:14.5px;color:#fff;transform:scaleX(0.9833);">8:08 PM</div>
<div class="t" style="left:1447.00px;top:880.04px;font-size:14.5px;line-height:14.5px;color:#fff;transform:scaleX(1.0693);">02/04/2019</div>
<svg class="a" style="left:1547px;top:864px;" width="24" height="20" viewBox="0 0 24 20"><path d="M1 1H22V14H8L3 19V14H1Z" fill="#fff"/><path d="M5 5H18M5 8H18M5 11H14" stroke="#999" stroke-width="1"/></svg>
<div class="a" style="left:1557px;top:875px;width:21px;height:21px;border-radius:50%;background:#1a1a1a;border:1.5px solid #777"></div>
<div class="t" style="left:1563.00px;top:879.74px;font-size:14.5px;line-height:14.5px;color:#fff;transform:scaleX(0.9920);">3</div>
<div class="a" style="left:1594px;top:850px;width:1px;height:50px;background:#555"></div>
<div class="a" style="left:527px;top:105px;width:546px;height:602px;background:#f0f0f0;border:1px solid #9dbdea;border-top-color:#3a84d8"></div>
<div class="a" style="left:528px;top:106px;width:544px;height:36px;background:#fff"></div>
<div class="t" style="left:537.60px;top:117.32px;font-size:15px;line-height:15px;color:#1e1e1e;transform:scaleX(0.9133);">Page Setup</div>
<div class="t" style="left:981.50px;top:115.63px;font-size:17px;line-height:17px;color:#333;transform:scaleX(0.7932);">?</div>
<svg class="a" style="left:1037px;top:117px;" width="13" height="13" viewBox="0 0 13 13"><path d="M0.5 0.5L12.5 12.5M12.5 0.5L0.5 12.5" stroke="#222" stroke-width="1"/></svg>
<div class="a" style="left:611px;top:153px;width:75px;height:27px;background:#f0f0f0;border:1px solid #d9d9d9;border-bottom:none"></div>
<div class="a" style="left:685px;top:153px;width:110px;height:27px;background:#f0f0f0;border:1px solid #d9d9d9;border-bottom:none"></div>
<div class="a" style="left:794px;top:153px;width:74px;height:27px;background:#f0f0f0;border:1px solid #d9d9d9;border-bottom:none"></div>
<div class="a" style="left:536px;top:179px;width:527px;height:476px;background:#fff;border:1px solid #d9d9d9"></div>
<div class="a" style="left:536px;top:151px;width:76px;height:29px;background:#fff;border:1px solid #d9d9d9;border-bottom:none"></div>
<div class="a" style="left:539px;top:155px;width:70px;height:24px;border:1px dotted #444"></div>
<div class="t" style="left:559.40px;top:161.09px;font-size:13.5px;line-height:13.5px;color:#262626;transform:scaleX(0.8817);">Page</div>
<div class="t" style="left:624.40px;top:161.59px;font-size:13.5px;line-height:13.5px;color:#333;transform:scaleX(0.9788);">Margins</div>
<div class="t" style="left:698.30px;top:161.59px;font-size:13.5px;line-height:13.5px;color:#333;transform:scaleX(0.9547);">Header/Footer</div>
<div class="t" style="left:815.30px;top:161.59px;font-size:13.5px;line-height:13.5px;color:#333;transform:scaleX(0.9127);">Sheet</div>
<div class="t" style="left:548.40px;top:195.29px;font-size:13.5px;line-height:13.5px;color:#262626;transform:scaleX(0.9843);">Orientation</div>
<div class="a" style="left:619px;top:201px;width:432px;height:1px;background:#dcdcdc"></div>
<svg class="a" style="left:565px;top:219px;" width="31" height="39" viewBox="0 0 31 39"><path d="M1 1H23L30 8V38H1Z" fill="#fff" stroke="#000" stroke-width="1.8"/><path d="M23 1V8H30" fill="none" stroke="#000" stroke-width="1"/><text x="15.5" y="28.6" text-anchor="middle" font-family="Liberation Serif" font-size="28" fill="#000" transform="translate(15.5 0) scale(1.12 1) translate(-15.5 0)">A</text></svg>
<svg class="a" style="left:736px;top:224px;" width="39" height="30" viewBox="0 0 39 30"><path d="M1 1H31L38 8V29H1Z" fill="#fff" stroke="#000" stroke-width="1.8"/><path d="M31 1V8H38" fill="none" stroke="#000" stroke-width="1"/><text x="19.5" y="23.6" text-anchor="middle" font-family="Liberation Serif" font-size="28" fill="#000" transform="translate(19.5 0) scale(1.12 1) translate(-19.5 0)">A</text></svg>
<svg class="a" style="left:630.7px;top:220.3px;" width="18" height="18" viewBox="0 0 18 18"><circle cx="9" cy="9" r="7.8" fill="#fff" stroke="#333" stroke-width="1.1"/><circle cx="9" cy="9" r="4.2" fill="#222"/></svg>
<div class="t" style="left:653.40px;top:224.19px;font-size:13.5px;line-height:13.5px;color:#262626;transform:scaleX(0.9905);">Por<u>t</u>rait</div>
<svg class="a" style="left:805.7px;top:220.3px;" width="18" height="18" viewBox="0 0 18 18"><circle cx="9" cy="9" r="7.8" fill="#fff" stroke="#333" stroke-width="1.1"/></svg>
<div class="t" style="left:828.50px;top:224.19px;font-size:13.5px;line-height:13.5px;color:#262626;transform:scaleX(0.9007);"><u>L</u>andscape</div>
<div class="t" style="left:548.50px;top:289.79px;font-size:13.5px;line-height:13.5px;color:#262626;transform:scaleX(0.9259);">Scaling</div>
<div class="a" style="left:594px;top:295px;width:457px;height:1px;background:#dcdcdc"></div>
<svg class="a" style="left:560.2px;top:316.9px;" width="18" height="18" viewBox="0 0 18 18"><circle cx="9" cy="9" r="7.8" fill="#fff" stroke="#333" stroke-width="1.1"/><circle cx="9" cy="9" r="4.2" fill="#222"/></svg>
<div class="t" style="left:582.60px;top:320.39px;font-size:13.5px;line-height:13.5px;color:#262626;transform:scaleX(0.9666);"><u>A</u>djust to:</div>
<div class="a" style="left:652px;top:313px;width:64px;height:27px;background:#fff;border:1px solid #adadad"></div>
<div class="a" style="left:693px;top:316px;width:20px;height:10px;background:#e1e1e1;border:1px solid #c4c4c4"></div>
<div class="a" style="left:693px;top:326px;width:20px;height:10px;background:#e1e1e1;border:1px solid #c4c4c4"></div>
<svg class="a" style="left:698px;top:318px;" width="10" height="6" viewBox="0 0 10 6"><path d="M0 5H10L5 0Z" fill="#222"/></svg>
<svg class="a" style="left:698px;top:329px;" width="10" height="6" viewBox="0 0 10 6"><path d="M0 0H10L5 5Z" fill="#444"/></svg>
<div class="t" style="left:656.50px;top:319.09px;font-size:13.5px;line-height:13.5px;color:#222;">100</div>
<div class="t" style="left:720.60px;top:320.19px;font-size:13.5px;line-height:13.5px;color:#262626;transform:scaleX(0.9401);">% normal size</div>
<svg class="a" style="left:560.2px;top:347.5px;" width="18" height="18" viewBox="0 0 18 18"><circle cx="9" cy="9" r="7.8" fill="#fff" stroke="#333" stroke-width="1.1"/></svg>
<div class="t" style="left:582.60px;top:351.09px;font-size:13.5px;line-height:13.5px;color:#262626;transform:scaleX(0.9391);"><u>F</u>it to:</div>
<div class="a" style="left:652px;top:344px;width:80px;height:27px;background:#fff;border:1px solid #adadad"></div>
<div class="a" style="left:655px;top:347px;width:55px;height:21px;background:#f0f0f0"></div>
<div class="a" style="left:709px;top:347px;width:20px;height:10px;background:#e1e1e1;border:1px solid #c4c4c4"></div>
<div class="a" style="left:709px;top:357px;width:20px;height:10px;background:#e1e1e1;border:1px solid #c4c4c4"></div>
<svg class="a" style="left:714px;top:349px;" width="10" height="6" viewBox="0 0 10 6"><path d="M0 5H10L5 0Z" fill="#222"/></svg>
<svg class="a" style="left:714px;top:360px;" width="10" height="6" viewBox="0 0 10 6"><path d="M0 0H10L5 5Z" fill="#444"/></svg>
<div class="t" style="left:656.50px;top:350.09px;font-size:13.5px;line-height:13.5px;color:#888;">1</div>
<div class="t" style="left:736.90px;top:351.09px;font-size:13.5px;line-height:13.5px;color:#555;transform:scaleX(0.9475);">page(s) wide by</div>
<div class="a" style="left:840px;top:344px;width:80px;height:27px;background:#fff;border:1px solid #adadad"></div>
<div class="a" style="left:843px;top:347px;width:55px;height:21px;background:#f0f0f0"></div>
<div class="a" style="left:897px;top:347px;width:20px;height:10px;background:#e1e1e1;border:1px solid #c4c4c4"></div>
<div class="a" style="left:897px;top:357px;width:20px;height:10px;background:#e1e1e1;border:1px solid #c4c4c4"></div>
<svg class="a" style="left:902px;top:349px;" width="10" height="6" viewBox="0 0 10 6"><path d="M0 5H10L5 0Z" fill="#222"/></svg>
<svg class="a" style="left:902px;top:360px;" width="10" height="6" viewBox="0 0 10 6"><path d="M0 0H10L5 5Z" fill="#444"/></svg>
<div class="t" style="left:844.50px;top:350.09px;font-size:13.5px;line-height:13.5px;color:#888;">1</div>
<div class="t" style="left:925.30px;top:351.09px;font-size:13.5px;line-height:13.5px;color:#262626;transform:scaleX(0.8808);">tall</div>
<div class="a" style="left:548px;top:392px;width:503px;height:1px;background:#dcdcdc"></div>
<div class="t" style="left:548.00px;top:417.09px;font-size:13.5px;line-height:13.5px;color:#262626;transform:scaleX(0.8944);">Paper si<u>z</u>e:</div>
<div class="a" style="left:633px;top:409px;width:419px;height:28px;background:#fff;border:1px solid #adadad"></div>
<div class="a" style="left:1028px;top:411px;width:22px;height:24px;background:#e1e1e1;border:1px solid #c4c4c4"></div>
<svg class="a" style="left:1033px;top:419px;" width="12" height="8" viewBox="0 0 12 8"><path d="M1 1L6 6L11 1" fill="none" stroke="#333" stroke-width="1.2"/></svg>
<div class="t" style="left:637.70px;top:417.09px;font-size:13.5px;line-height:13.5px;color:#333;transform:scaleX(0.9574);">A4 210 x 297 mm</div>
<div class="t" style="left:548.00px;top:449.79px;font-size:13.5px;line-height:13.5px;color:#262626;transform:scaleX(0.9773);">Print <u>q</u>uality:</div>
<div class="a" style="left:633px;top:442px;width:419px;height:28px;background:#efefef;border:1px solid #c2c2c2"></div>
<div class="a" style="left:1028px;top:443px;width:22px;height:25px;background:#e1e1e1;border:1px solid #c4c4c4"></div>
<svg class="a" style="left:1033px;top:452px;" width="12" height="8" viewBox="0 0 12 8"><path d="M1 1L6 6L11 1" fill="none" stroke="#333" stroke-width="1.2"/></svg>
<div class="t" style="left:548.00px;top:491.79px;font-size:13.5px;line-height:13.5px;color:#262626;transform:scaleX(0.9558);">Fi<u>r</u>st page number:</div>
<div class="a" style="left:669px;top:485px;width:59px;height:27px;background:#fff;border:1px solid #adadad"></div>
<div class="t" style="left:673.00px;top:489.59px;font-size:13.5px;line-height:13.5px;color:#222;transform:scaleX(0.9722);">Auto</div>
<div class="a" style="left:714px;top:612px;width:104px;height:30px;background:#e1e1e1;border:1px solid #adadad"></div>
<div class="t" style="left:748.00px;top:621.09px;font-size:13.5px;line-height:13.5px;color:#333;transform:scaleX(0.9074);"><u>P</u>rint...</div>
<div class="a" style="left:831px;top:612px;width:103px;height:30px;background:#e1e1e1;border:1px solid #adadad"></div>
<div class="t" style="left:844.00px;top:621.09px;font-size:13.5px;line-height:13.5px;color:#333;transform:scaleX(0.9682);">Print Previe<u>w</u></div>
<div class="a" style="left:947px;top:612px;width:104px;height:30px;background:#e5f1fb;border:1px solid #3d8ee0"></div>
<div class="t" style="left:972.40px;top:621.09px;font-size:13.5px;line-height:13.5px;color:#333;transform:scaleX(0.9191);"><u>O</u>ptions...</div>
<div class="a" style="left:844px;top:667px;width:102px;height:30px;background:#e1e1e1;border:2px solid #0078d7"></div>
<div class="t" style="left:886.00px;top:676.09px;font-size:13.5px;line-height:13.5px;color:#333;transform:scaleX(0.8459);">OK</div>
<div class="a" style="left:960px;top:667px;width:103px;height:30px;background:#e1e1e1;border:1px solid #adadad"></div>
<div class="t" style="left:992.50px;top:676.09px;font-size:13.5px;line-height:13.5px;color:#333;transform:scaleX(0.8923);">Cancel</div>
<svg class="a" style="left:1020px;top:585px;" width="160" height="90" viewBox="0 0 160 90"><path d="M13 42.4L80.5 7.6V25H148V60.4H80.5V77.5Z" fill="none" stroke="#ec1118" stroke-width="3.4" stroke-linejoin="round"/></svg>
</body></html>
